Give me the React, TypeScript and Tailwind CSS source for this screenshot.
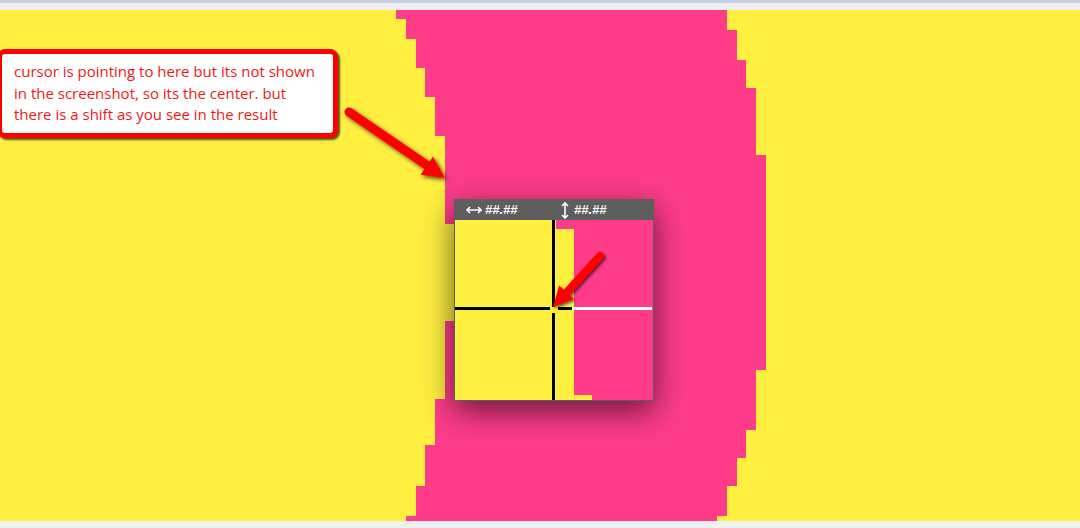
import React from "react";

const YELLOW = "#ffef40";
const PINK = "#ff3c8a";

// stepped outline of the pink blob, page coordinates
const blob = [
  [396, 10], [396, 19], [406, 19], [406, 39], [416, 39], [416, 68], [425, 68], [425, 97],
  [435, 97], [435, 136], [445, 136], [445, 224], [455, 224], [455, 321], [445, 321],
  [445, 399], [435, 399], [435, 445], [425, 445], [425, 486], [416, 486], [416, 516],
  [406, 516], [406, 521], [717, 521], [717, 516], [727, 516], [727, 486], [737, 486],
  [737, 458], [746, 458], [746, 430], [756, 430], [756, 370], [766, 370], [766, 155],
  [756, 155], [756, 88], [746, 88], [746, 60], [737, 60], [737, 30], [727, 30], [727, 10],
]
  .map((p) => p.join(","))
  .join(" ");

function Callout() {
  return (
    <div className="absolute left-[-3px] top-[39px] h-[89px] w-[341px] rounded-[8px] border-[5px] border-[#ff0000] bg-white pl-[12px] pt-[7px] shadow-[2px_2px_2px_rgba(0,0,0,0.65)]">
      <p className="font-['Open_Sans',sans-serif] text-[15px] leading-[21.5px] text-[#f01818]">
        cursor is pointing to here but its not shown
        <br />
        in the screenshot, so its the center. but
        <br />
        there is a shift as you see in the result
      </p>
    </div>
  );
}

function Magnifier() {
  return (
    <div className="absolute left-[454px] top-[189px] w-[200px] border border-[#5e5e5e] bg-[#5e5e5e] shadow-[0_10px_30px_rgba(0,0,0,0.6)]">
      <div className="flex h-[20px] items-center font-['Liberation_Sans',sans-serif] text-[13px] font-bold italic text-white">
        <div className="flex w-[106px] items-center gap-[3px] pl-[11px]">
          <svg width="16" height="8" viewBox="0 0 16 8">
            <path d="M1 4h14M4 1L1 4l3 3M12 1l3 3-3 3" fill="none" stroke="white" strokeWidth="1.6" />
          </svg>
          <span>##.##</span>
        </div>
        <div className="flex items-center gap-[5px]">
          <svg width="8" height="17" viewBox="0 0 8 17">
            <path d="M4 1v15M1 4l3-3 3 3M1 13l3 3 3-3" fill="none" stroke="white" strokeWidth="1.6" />
          </svg>
          <span>##.##</span>
        </div>
      </div>
      <svg width="198" height="180" viewBox="0 0 198 180" className="block" shapeRendering="crispEdges">
        <rect width="198" height="180" fill={YELLOW} />
        <rect x="119" y="0" width="79" height="175" fill={PINK} />
        <rect x="101" y="0" width="18" height="9" fill={PINK} />
        <rect x="137" y="175" width="61" height="5" fill={PINK} />
        <rect x="97" y="0" width="3" height="87" fill="#000" />
        <rect x="97" y="93" width="3" height="87" fill="#000" />
        <rect x="0" y="87" width="95" height="3" fill="#000" />
        <rect x="103" y="87" width="14" height="3" fill="#000" />
        <rect x="117" y="87" width="80" height="3" fill="#fff" />
        <g filter="url(#sh2)" shapeRendering="auto">
          <line x1="145" y1="36" x2="113" y2="71" stroke="#ff0000" strokeWidth="8" strokeLinecap="round" />
          <polygon points="98,87 104.2,65.5 118.9,79.1" fill="#ff0000" />
        </g>
        <defs>
          <filter id="sh2" x="-30%" y="-30%" width="160%" height="160%">
            <feDropShadow dx="1.5" dy="1.5" stdDeviation="1.5" floodColor="#000" floodOpacity="0.7" />
          </filter>
        </defs>
      </svg>
    </div>
  );
}

export default function App() {
  return (
    <div className="flex h-[528px] w-[1080px] flex-col overflow-hidden bg-[#f0f0f0]">
      <div className="h-[3px] bg-[#c6d0e1]" />
      <div className="h-[7px] bg-[#f0f0f0]" />
      <div className="relative h-[511px]">
        <svg width="1080" height="511" viewBox="0 10 1080 511" className="block" shapeRendering="crispEdges">
          <rect x="0" y="10" width="1080" height="511" fill={YELLOW} />
          <polygon points={blob} fill={PINK} />
        </svg>
        <Callout />
        <svg
          width="1080"
          height="511"
          viewBox="0 10 1080 511"
          className="pointer-events-none absolute inset-0"
        >
          <defs>
            <filter id="sh1" x="-20%" y="-20%" width="140%" height="140%">
              <feDropShadow dx="2" dy="2" stdDeviation="2" floodColor="#000" floodOpacity="0.7" />
            </filter>
          </defs>
          <g filter="url(#sh1)">
            <line x1="349" y1="112" x2="428" y2="166" stroke="#ff0000" strokeWidth="9" strokeLinecap="round" />
            <polygon points="445,178 420.6,174.7 433,156.5" fill="#ff0000" />
          </g>
        </svg>
        <Magnifier />
      </div>
      <div className="h-[7px] bg-[#f0f0f0]" />
    </div>
  );
}
